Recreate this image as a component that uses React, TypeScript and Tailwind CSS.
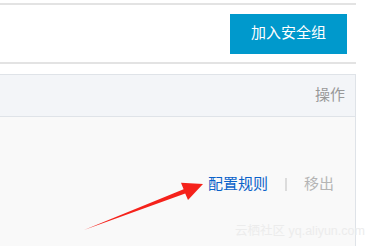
const font = { fontFamily: '"Liberation Sans", "Noto Sans CJK SC", sans-serif' };

const Arrow = () => (
	<svg className="absolute left-0 top-0 pointer-events-none" width="365" height="246" viewBox="0 0 365 246">
		<polygon points="84,230 183.6,189.2 181,182.7 203,184 188,200 185.2,193.4" fill="#f5221b" />
	</svg>
);

export default function App() {
	return (
		<div className="relative w-[365px] h-[246px] bg-white overflow-hidden" style={font}>
			<div className="w-[356px]">
				<div className="h-[3px]"></div>
				<div className="h-[61px] border-t-2 border-b-2 border-[#e3e3e3] flex items-center justify-end pr-[9px]">
					<button className="w-[117px] h-[40px] bg-[#0099cc] text-white text-[15px]">加入安全组</button>
				</div>
				<div className="h-[10px]"></div>
				<div className="border-t border-r border-[#dfe3e8]">
					<div className="h-[42px] bg-[#f3f5f8] border-b border-[#dfe3e8] flex items-center justify-end pr-[10px] text-[15px] text-[#999]">
						操作
					</div>
					<div className="h-[130px] bg-[#f9f9f9] flex justify-end pt-[57px] pr-[21px] text-[15px]">
						<div className="flex items-center h-[20px] leading-[20px]">
							<span className="text-[#0a62c9]">配置规则</span>
							<span className="mx-[17px] w-[2px] h-[13px] bg-[#dcdcdc]"></span>
							<span className="text-[#b5b5b5]">移出</span>
						</div>
					</div>
				</div>
			</div>
			<div className="absolute left-[235px] top-[222px] text-[12.5px] text-[#ececec] whitespace-nowrap">云栖社区 yq.aliyun.com</div>
			<Arrow />
		</div>
	);
}
